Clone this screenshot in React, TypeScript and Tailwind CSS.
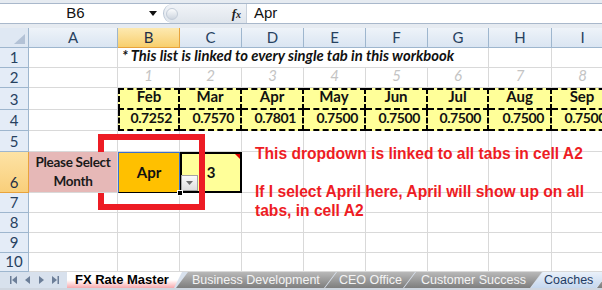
import React from "react";

const months = ["Feb", "Mar", "Apr", "May", "Jun", "Jul", "Aug", "Sep"];
const values = ["0.7252", "0.7570", "0.7801", "0.7500", "0.7500", "0.7500", "0.7500", "0.7500"];
const colLetters = ["A", "B", "C", "D", "E", "F", "G", "H", "I"];

function RowHead({ n, active = false }: { n: number; active?: boolean }) {
  return (
    <div
      className={
        active
          ? "flex items-end justify-center pb-[1px] border-r border-b border-[#e8a33c] bg-linear-to-b from-[#fde3a5] to-[#f9cf7a] text-[#1f2f47] text-[15px] leading-[18px]"
          : "flex items-end justify-center pb-[1px] border-r border-b border-[#9eb6ce] bg-[#e4ecf7] text-[#27415f] text-[15px] leading-[18px]"
      }
    >
      {n}
    </div>
  );
}

function Blank() {
  return <div className="border-r border-b border-[#d9d9d9]" />;
}

export default function App() {
  return (
    <div className="relative w-[602px] h-[290px] overflow-hidden bg-white font-['Lato',_sans-serif]">
      {/* Formula bar */}
      <div className="h-[28px] bg-[#e6ebf1] pt-[3px]">
        <div className="flex h-[21px] bg-white border-y border-[#a9b8cb]">
          <div className="w-[163px] shrink-0 flex items-center">
            <div className="flex-1 text-center text-[15px] text-[#111] pl-[2px] font-['Liberation_Sans',_sans-serif]">B6</div>
            <svg width="8" height="5" viewBox="0 0 8 5" className="mr-[6px]">
              <path d="M0 0H8L4 5Z" fill="#111" />
            </svg>
          </div>
          <div className="w-[83px] shrink-0 h-full flex items-center rounded-l-[10px] bg-linear-to-b from-[#f1f4f8] to-[#dfe5ec] border-l border-[#b9c5d4]">
            <div className="ml-[2px] w-[12px] h-[12px] rounded-full bg-linear-to-b from-[#fbfcfd] to-[#cdd5df] border border-[#c3ccd8]" />
            <div className="flex-1" />
            <span className="mr-[5px] text-[13px] italic font-bold text-[#222] font-['Liberation_Serif',_serif]">
              f<span className="text-[10px]">x</span>
            </span>
          </div>
          <div className="w-px shrink-0 h-full bg-[#c8d1dc]" />
          <div className="pl-[7px] flex items-center text-[15px] text-[#111] font-['Liberation_Sans',_sans-serif]">Apr</div>
        </div>
      </div>

      {/* Grid */}
      <div className="grid w-max grid-cols-[29px_89px_62px_62px_62px_62px_62px_61px_63px_62px] grid-rows-[20px_20px_20px_22px_21px_21px_41px_20px_20px_20px_19px] text-[15px] text-[#111]">
        {/* header row */}
        <div className="flex items-end justify-end pr-[3px] pb-[3px] bg-[#dfe8f3] border-r border-b border-[#9eb6ce]">
          <svg width="11" height="10" viewBox="0 0 11 10">
            <path d="M11 0V10H0Z" fill="#b3c2d6" />
          </svg>
        </div>
        {colLetters.map((c) =>
          c === "B" ? (
            <div
              key={c}
              className="flex items-center justify-center border-r border-b border-[#e8a33c] bg-linear-to-b from-[#fde9b0] to-[#f8cf6c] text-[#1f2f47]"
            >
              {c}
            </div>
          ) : (
            <div
              key={c}
              className="flex items-center justify-center border-r border-b border-[#9eb6ce] bg-linear-to-b from-[#eef3f9] to-[#dae5f2] text-[#27415f]"
            >
              {c}
            </div>
          )
        )}

        {/* row 1 */}
        <RowHead n={1} />
        <Blank />
        <div className="col-span-6 flex items-end pl-[4px] pb-[1px] border-r border-b border-[#d9d9d9] text-[14.8px] font-bold italic whitespace-nowrap">
          * This list is linked to every single tab in this workbook
        </div>
        <Blank />
        <Blank />

        {/* row 2 */}
        <RowHead n={2} />
        <Blank />
        {months.map((_, i) => (
          <div key={i} className="flex items-end justify-center pb-[1px] border-r border-b border-[#d9d9d9] italic text-[#c4c4c4]">
            {i + 1}
          </div>
        ))}

        {/* row 3 */}
        <RowHead n={3} />
        <Blank />
        {months.map((m, i) => (
          <div
            key={m}
            className={
              i === 0
                ? "flex items-end justify-center pb-[1px] bg-[#ffff99] border-2 border-dashed border-black font-bold"
                : "flex items-end justify-center pb-[1px] bg-[#ffff99] border-t-2 border-r-2 border-b-2 border-dashed border-black font-bold"
            }
          >
            {m}
          </div>
        ))}

        {/* row 4 */}
        <RowHead n={4} />
        <Blank />
        {values.map((v, i) => (
          <div
            key={i}
            className={
              i === 0
                ? "flex items-end justify-end pr-[6px] pb-[1px] bg-[#ffff99] border-l-2 border-r-2 border-b-2 border-dashed border-black font-bold text-[14px] tracking-[-0.4px] whitespace-nowrap"
                : "flex items-end justify-end pr-[6px] pb-[1px] bg-[#ffff99] border-r-2 border-b-2 border-dashed border-black font-bold text-[14px] tracking-[-0.4px] whitespace-nowrap"
            }
          >
            {v}
          </div>
        ))}

        {/* row 5 */}
        <RowHead n={5} />
        {colLetters.map((c) => (
          <Blank key={c} />
        ))}

        {/* row 6 */}
        <RowHead n={6} active />
        <div className="relative z-20 flex flex-col items-center justify-center bg-[#e6b8b7] border-r border-b border-[#d9d9d9] font-bold text-[13.5px] tracking-[-0.3px] leading-[19px] text-[#1a1a1a] whitespace-nowrap">
          <span>Please Select</span>
          <span>Month</span>
        </div>
        <div className="relative flex items-center justify-center bg-[#ffc000] border border-[#3b6fd0] border-b-black font-bold">
          Apr
          <div className="absolute right-[-19px] bottom-[1px] w-[17px] h-[16px] flex items-center justify-center bg-linear-to-b from-[#fbfbfb] to-[#dedede] border border-[#a3a3a3] z-10">
            <svg width="7" height="4" viewBox="0 0 7 4">
              <path d="M0 0H7L3.5 4Z" fill="#6d6d6d" />
            </svg>
          </div>
          <div className="absolute right-[-4px] bottom-[-4px] w-[6px] h-[6px] bg-black border border-white z-10" />
        </div>
        <div className="relative flex items-center justify-center bg-[#ffff99] border-2 border-black font-bold">
          3
          <svg width="5" height="5" viewBox="0 0 5 5" className="absolute right-0 top-0">
            <path d="M0 0H5V5Z" fill="#e00000" />
          </svg>
        </div>
        <Blank />
        <Blank />
        <Blank />
        <Blank />
        <Blank />
        <Blank />

        {/* rows 7-10 */}
        {[7, 8, 9, 10].map((r) => (
          <React.Fragment key={r}>
            <RowHead n={r} />
            {colLetters.map((c) => (
              <Blank key={c} />
            ))}
          </React.Fragment>
        ))}
      </div>

      {/* Sheet tabs bar */}
      <div className="flex h-[16px] bg-[#d8e1ed] font-['Liberation_Sans',_sans-serif]">
        <div className="w-[67px] shrink-0 flex items-center pl-[6px]">
          <div className="w-[14px] flex justify-center">
            <svg width="7" height="8" viewBox="0 0 7 8">
              <path d="M0 0H1.5V8H0Z M7 0V8L2 4Z" fill="#6c7e98" />
            </svg>
          </div>
          <div className="w-[14px] flex justify-center">
            <svg width="5" height="8" viewBox="0 0 5 8">
              <path d="M5 0V8L0 4Z" fill="#6c7e98" />
            </svg>
          </div>
          <div className="w-[14px] flex justify-center">
            <svg width="5" height="8" viewBox="0 0 5 8">
              <path d="M0 0V8L5 4Z" fill="#6c7e98" />
            </svg>
          </div>
          <div className="w-[14px] flex justify-center">
            <svg width="7" height="8" viewBox="0 0 7 8">
              <path d="M0 0V8L5 4Z M5.5 0H7V8H5.5Z" fill="#6c7e98" />
            </svg>
          </div>
        </div>
        <div className="relative z-10 shrink-0 w-[115px] flex items-center pl-[8px] bg-linear-to-b from-white via-white to-[#f6a8ad] [clip-path:polygon(0_0,100%_0,calc(100%-8px)_100%,0_100%)] text-[13px] font-bold text-black whitespace-nowrap">
          FX Rate Master
        </div>
        <div className="ml-[-6px] shrink-0 w-[160px] flex items-center pl-[16px] bg-linear-to-b from-[#b9b9b9] to-[#7e7e7e] [clip-path:polygon(12px_0,100%_0,calc(100%-12px)_100%,0_100%)] text-[12.5px] text-[#f4f4f4] whitespace-nowrap">
          Business Development
        </div>
        <div className="ml-[-11px] shrink-0 w-[90px] flex items-center pl-[14px] bg-linear-to-b from-[#b9b9b9] to-[#7e7e7e] [clip-path:polygon(12px_0,100%_0,calc(100%-12px)_100%,0_100%)] text-[12.5px] text-[#f4f4f4] whitespace-nowrap">
          CEO Office
        </div>
        <div className="ml-[-11px] shrink-0 w-[138px] flex items-center pl-[17px] bg-linear-to-b from-[#b9b9b9] to-[#7e7e7e] [clip-path:polygon(12px_0,100%_0,calc(100%-12px)_100%,0_100%)] text-[12.5px] text-[#f4f4f4] whitespace-nowrap">
          Customer Success
        </div>
        <div className="ml-[-11px] shrink-0 w-[77px] flex items-center pl-[13px] bg-linear-to-b from-[#eaf1fa] to-[#c5d7ee] [clip-path:polygon(12px_0,100%_0,calc(100%-12px)_100%,0_100%)] text-[12.5px] text-[#1f3b63] whitespace-nowrap">
          Coaches
        </div>
        <div className="ml-[-11px] shrink-0 w-[40px] bg-linear-to-b from-[#b9b9b9] to-[#7e7e7e] [clip-path:polygon(12px_0,100%_0,calc(100%-12px)_100%,0_100%)]" />
      </div>
      <div className="h-[2px] bg-[#cfd6e0]" />

      {/* Red highlight box */}
      <div className="absolute z-10 left-[98px] top-[134px] w-[107px] h-[76px] border-[6px] border-[#ed1c24]" />

      {/* Red annotation text */}
      <div className="absolute left-[255px] top-[144px] text-[15.6px] leading-[19px] font-bold text-[#ee1c24] whitespace-nowrap font-['Liberation_Sans',_sans-serif]">
        <div>This dropdown is linked to all tabs in cell A2</div>
        <div className="h-[19px]" />
        <div>If I select April here, April will show up on all</div>
        <div>tabs, in cell A2</div>
      </div>
    </div>
  );
}
